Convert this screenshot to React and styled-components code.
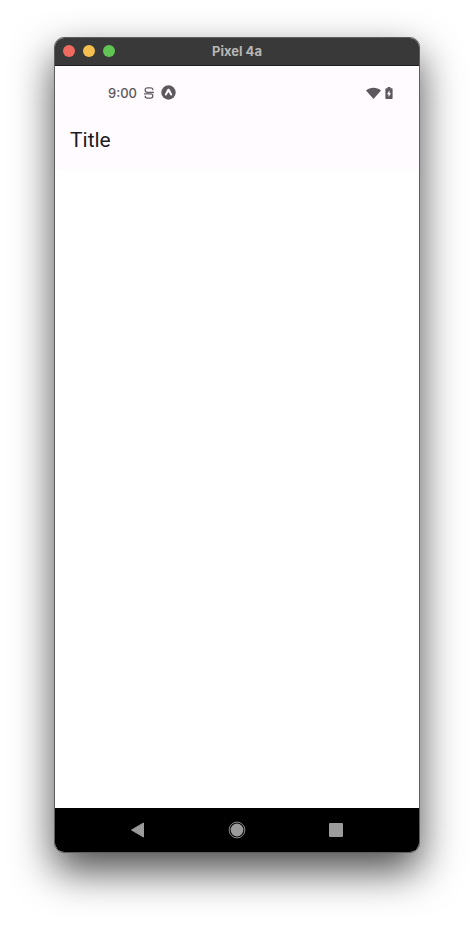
import styled, { createGlobalStyle } from 'styled-components';

const windowButtons = [
	{ label: 'Close', color: '#ee6a5f' },
	{ label: 'Minimize', color: '#f5bf4f' },
	{ label: 'Zoom', color: '#61c554' },
];

const App = () => {
	return (
		<>
			<GlobalStyle />
			<Desktop>
				<Window>
					<TitleBar>
						<WindowButtons>
							{windowButtons.map((button) => (
								<WindowButton
									key={button.label}
									type='button'
									aria-label={button.label}
									$color={button.color}
								/>
							))}
						</WindowButtons>
						<WindowTitle>Pixel 4a</WindowTitle>
					</TitleBar>
					<AppBar>
						<StatusBar>
							<StatusGroup>
								<Clock>9:00</Clock>
								<SyncIcon />
								<CaretIcon />
							</StatusGroup>
							<StatusGroup $tight>
								<WifiIcon />
								<BatteryIcon />
							</StatusGroup>
						</StatusBar>
						<Title>Title</Title>
					</AppBar>
					<Content />
					<NavBar>
						<NavButton type='button' aria-label='Back'>
							<svg width='16' height='18' viewBox='0 0 16 18'>
								<path
									d='M13.5 2v14L1.5 9z'
									fill='#9b9b9b'
									stroke='#9b9b9b'
									strokeLinejoin='round'
								/>
							</svg>
						</NavButton>
						<NavButton type='button' aria-label='Home'>
							<svg width='18' height='18' viewBox='0 0 18 18'>
								<circle cx='9' cy='9' r='6.4' fill='#9b9b9b' />
								<circle
									cx='9'
									cy='9'
									r='7.9'
									fill='none'
									stroke='#9b9b9b'
									strokeWidth='0.9'
								/>
							</svg>
						</NavButton>
						<NavButton type='button' aria-label='Recent apps'>
							<svg width='14' height='14' viewBox='0 0 14 14'>
								<rect width='14' height='14' rx='1' fill='#9b9b9b' />
							</svg>
						</NavButton>
					</NavBar>
				</Window>
			</Desktop>
		</>
	);
};

// Two interlocking hooks with a bar through the middle
const SyncIcon = () => (
	<svg width='10' height='12' viewBox='0 0 10 12' aria-hidden='true'>
		<g fill='none' stroke='#625e64' strokeWidth='1.3'>
			<path d='M8.8 3.2V2.8C8.8 1.5 7.8.8 6.6.8H3.4C2.1.8 1.2 1.6 1.2 2.8v.7c0 1.2.9 1.8 2.2 1.8H10' />
			<path d='M0 6.9h6.6c1.3 0 2.2.6 2.2 1.8v.4c0 1.3-.9 2.1-2.2 2.1H3.4c-1.3 0-2.2-.8-2.2-2.1v-.4' />
		</g>
	</svg>
);

const CaretIcon = () => (
	<svg width='15' height='15' viewBox='0 0 15 15' aria-hidden='true'>
		<circle cx='7.5' cy='7.5' r='7.2' fill='#5c585e' />
		<path
			d='M7.1 3.8h.8c.3 0 .5.2.7.5l2.5 5c.3.7-.8 1.8-1.4 1.1L7.5 7l-2.2 3.4c-.6.7-1.7-.4-1.4-1.1l2.5-5c.2-.3.4-.5.7-.5z'
			fill='#fffbff'
		/>
	</svg>
);

const WifiIcon = () => (
	<svg width='15' height='12' viewBox='0 0 15 12' aria-hidden='true'>
		<path d='M0 3.4C4.2-.3 10.8-.3 15 3.4L7.5 12z' fill='#5c585e' />
	</svg>
);

const BatteryIcon = () => (
	<svg width='8' height='12' viewBox='0 0 8 12' aria-hidden='true'>
		<path
			d='M2.6 0h2.8v1.2h1.4c.5 0 .8.3.8.8v9.2c0 .5-.3.8-.8.8H1.2c-.5 0-.8-.3-.8-.8V2c0-.5.3-.8.8-.8h1.4z'
			fill='#5c585e'
		/>
		<path d='M4.6 3.2 2 7.2h1.5V10L6 6.2H4.6z' fill='#fffbff' />
	</svg>
);

export default App;

const GlobalStyle = createGlobalStyle`
	* {
		box-sizing: border-box;
	}
	body {
		margin: 0;
		background: #fff;
		font-family: Roboto, sans-serif;
	}
	button {
		padding: 0;
		border: none;
		background: none;
		cursor: pointer;
	}
	svg {
		display: block;
	}
`;
const Desktop = styled.div`
	display: flex;
	min-height: 100vh;
	padding: 37px 54px 72px;
	overflow: hidden;
`;
const Window = styled.main`
	display: flex;
	flex: 1;
	flex-direction: column;
	overflow: hidden;
	border: 1px solid #5e5e5e;
	border-radius: 10px;
	background: #fff;
	box-shadow: 0 18px 40px rgba(0, 0, 0, 0.7);
`;
const TitleBar = styled.header`
	display: grid;
	grid-template-columns: 1fr auto 1fr;
	align-items: center;
	height: 28px;
	padding: 0 8px 2px;
	border-bottom: 1px solid #1e1e1e;
	background: #393939;
`;
const WindowButtons = styled.div`
	display: flex;
	gap: 8px;
`;
const WindowButton = styled.button`
	width: 12px;
	height: 12px;
	border-radius: 50%;
	background: ${({ $color }) => $color};
`;
const WindowTitle = styled.div`
	color: #b6b6b6;
	font: bold 13px/16px Inter, sans-serif;
`;
const AppBar = styled.div`
	background: #fffbff;
`;
const StatusBar = styled.div`
	display: flex;
	align-items: center;
	justify-content: space-between;
	height: 53px;
	padding: 0 26px 0 53px;
`;
const StatusGroup = styled.div`
	display: flex;
	align-items: center;
	gap: ${({ $tight }) => ($tight ? '4px' : '7px')};
`;
const Clock = styled.time`
	color: #5c585e;
	font: 500 13px/16px Inter, sans-serif;
`;
const Title = styled.h1`
	margin: 0;
	padding: 9px 15px 18px;
	color: #1c1b1f;
	font-size: 21px;
	font-weight: 400;
	line-height: 24px;
`;
const Content = styled.section`
	flex: 1;
`;
const NavBar = styled.nav`
	display: grid;
	grid-template-columns: repeat(3, 1fr);
	height: 44px;
	padding: 0 34px;
	background: #000;
`;
const NavButton = styled.button`
	display: flex;
	align-items: center;
	justify-content: center;
`;
